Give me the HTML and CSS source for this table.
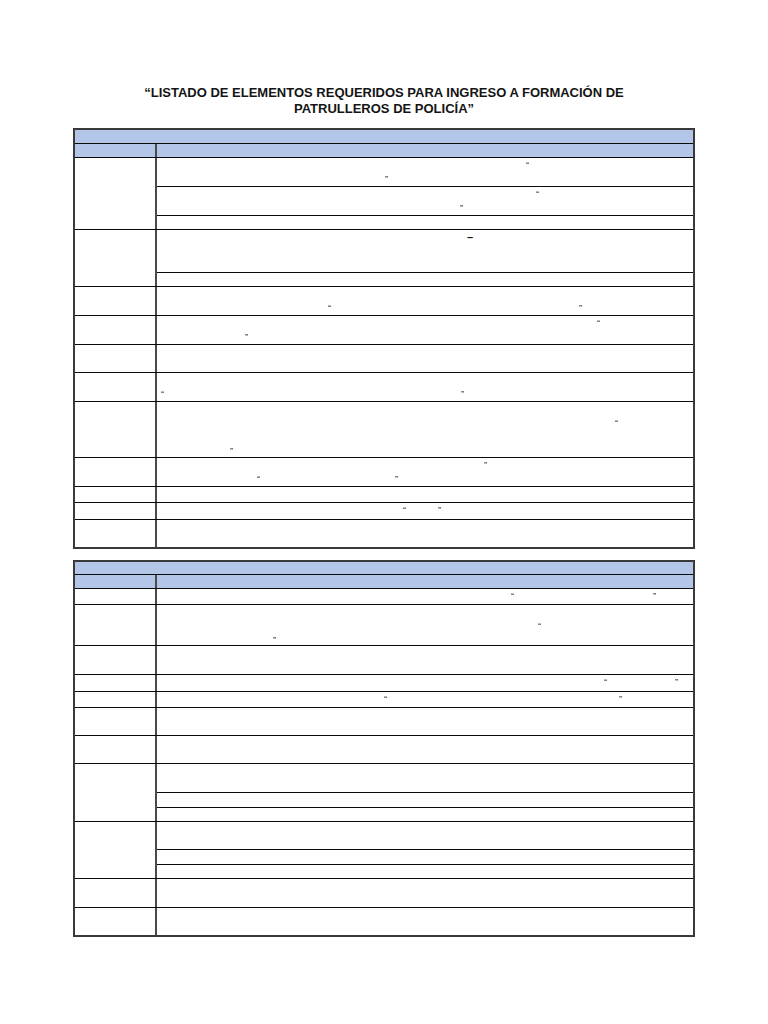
FILE: index.html
```html
<!DOCTYPE html>
<html lang="es">
<head>
<meta charset="utf-8">
<title>Listado de elementos requeridos</title>
<link rel="stylesheet" href="styles.css">
</head>
<body>
<div class="doc">
  <h1 class="title">“LISTADO DE ELEMENTOS REQUERIDOS PARA INGRESO A FORMACIÓN DE<br>PATRULLEROS DE POLICÍA”</h1>

  <div class="tbl">
    <div class="hd h13"></div>
    <div class="row hd2 h14"><div class="lab"></div><div class="val"></div></div>

    <div class="row">
      <div class="lab"></div>
      <div class="val">
        <div class="sub h28">
          <div class="ln"><span class="q m369">“</span></div>
          <div class="ln"><span class="q m228">”</span></div>
        </div>
        <div class="sub h29">
          <div class="ln"><span class="q m379">“</span></div>
          <div class="ln"><span class="q m303">”</span></div>
        </div>
        <div class="sub h14"></div>
      </div>
    </div>

    <div class="row">
      <div class="lab"></div>
      <div class="val">
        <div class="sub h42">
          <div class="ln"><span class="dash m310">–</span></div>
        </div>
        <div class="sub h14"></div>
      </div>
    </div>

    <div class="row h29"><div class="lab"></div><div class="val">
      <div class="ln"></div>
      <div class="ln"><span class="q m171">“</span><span class="q m422">”</span></div>
    </div></div>

    <div class="row h29"><div class="lab"></div><div class="val">
      <div class="ln"><span class="q m440">“</span></div>
      <div class="ln"><span class="q m88">”</span></div>
    </div></div>

    <div class="row h28"><div class="lab"></div><div class="val"></div></div>

    <div class="row h29"><div class="lab"></div><div class="val">
      <div class="ln"></div>
      <div class="ln"><span class="q m4">“</span><span class="q m304">”</span></div>
    </div></div>

    <div class="row h56"><div class="lab"></div><div class="val">
      <div class="ln"></div>
      <div class="ln"><span class="q m458">“</span></div>
      <div class="ln"></div>
      <div class="ln"><span class="q m73">”</span></div>
    </div></div>

    <div class="row h29"><div class="lab"></div><div class="val">
      <div class="ln"><span class="q m327">”</span></div>
      <div class="ln"><span class="q m100">“</span><span class="q m238">”</span></div>
    </div></div>

    <div class="row h16"><div class="lab"></div><div class="val"></div></div>

    <div class="row h17"><div class="lab"></div><div class="val">
      <div class="ln"><span class="q m246">“</span><span class="q m281">”</span></div>
    </div></div>

    <div class="row h28"><div class="lab"></div><div class="val"></div></div>
  </div>

  <div class="tbl second">
    <div class="hd h12"></div>
    <div class="row hd2 h14"><div class="lab"></div><div class="val"></div></div>

    <div class="row h16"><div class="lab"></div><div class="val">
      <div class="ln"><span class="q m354">“</span><span class="q m496">”</span></div>
    </div></div>

    <div class="row h41"><div class="lab"></div><div class="val">
      <div class="ln"></div>
      <div class="ln"><span class="q m381">“</span></div>
      <div class="ln"><span class="q m116">”</span></div>
    </div></div>

    <div class="row h29"><div class="lab"></div><div class="val"></div></div>

    <div class="row h17"><div class="lab"></div><div class="val">
      <div class="ln"><span class="q m447">“</span><span class="q m518">”</span></div>
    </div></div>

    <div class="row h16"><div class="lab"></div><div class="val">
      <div class="ln"><span class="q m227">“</span><span class="q m462">”</span></div>
    </div></div>

    <div class="row h28"><div class="lab"></div><div class="val"></div></div>
    <div class="row h28"><div class="lab"></div><div class="val"></div></div>

    <div class="row">
      <div class="lab"></div>
      <div class="val">
        <div class="sub h28"></div>
        <div class="sub h15"></div>
        <div class="sub h14"></div>
      </div>
    </div>

    <div class="row">
      <div class="lab"></div>
      <div class="val">
        <div class="sub h27"></div>
        <div class="sub h15"></div>
        <div class="sub h14"></div>
      </div>
    </div>

    <div class="row h29"><div class="lab"></div><div class="val"></div></div>
    <div class="row h28"><div class="lab"></div><div class="val"></div></div>
  </div>
</div>
</body>
</html>
```

FILE: styles.css
```css
* { box-sizing: border-box; }

html, body {
  margin: 0;
  padding: 0;
  background: #ffffff;
}

body {
  font-family: "Liberation Sans", Arial, sans-serif;
  color: #111111;
}

.doc {
  width: 622px;
  margin: 0 auto;
  padding-top: 85px;
}

.title {
  margin: 0 0 11px 0;
  font-size: 13px;
  line-height: 16px;
  font-weight: bold;
  text-align: center;
  color: #141414;
}

.tbl {
  border: 2px solid #3a3a3a;
  display: flex;
  flex-direction: column;
}

.tbl.second {
  margin-top: 11px;
}

.hd {
  background: #b4c6e7;
}

.row {
  display: grid;
  grid-template-columns: 82px 1fr;
  border-top: 1px solid #0a0a0a;
}

.hd2 {
  background: #b4c6e7;
}

.lab {
  border-right: 2px solid #4a4a4a;
}

.val {
  display: flex;
  flex-direction: column;
  min-width: 0;
}

.sub + .sub {
  border-top: 1px solid #0a0a0a;
}

.ln {
  height: 14px;
  display: grid;
  grid-template-columns: 1fr;
}

.ln > span {
  grid-area: 1 / 1;
  justify-self: start;
  line-height: 14px;
}

.q {
  font-size: 9px;
  color: #333333;
}

.dash {
  font-size: 11px;
  font-weight: bold;
  color: #111111;
}

/* row heights */
.h12 { height: 12px; }
.h13 { height: 13px; }
.h14 { height: 14px; }
.h15 { height: 15px; }
.h16 { height: 16px; }
.h17 { height: 17px; }
.h27 { height: 27px; }
.h28 { height: 28px; }
.h29 { height: 29px; }
.h41 { height: 41px; }
.h42 { height: 42px; }
.h56 { height: 56px; }

/* horizontal offsets of stray marks inside the wide column */
.m4 { margin-left: 4px; }
.m73 { margin-left: 73px; }
.m88 { margin-left: 88px; }
.m100 { margin-left: 100px; }
.m116 { margin-left: 116px; }
.m171 { margin-left: 171px; }
.m227 { margin-left: 227px; }
.m228 { margin-left: 228px; }
.m238 { margin-left: 238px; }
.m246 { margin-left: 246px; }
.m281 { margin-left: 281px; }
.m303 { margin-left: 303px; }
.m304 { margin-left: 304px; }
.m310 { margin-left: 310px; }
.m327 { margin-left: 327px; }
.m354 { margin-left: 354px; }
.m369 { margin-left: 369px; }
.m379 { margin-left: 379px; }
.m381 { margin-left: 381px; }
.m422 { margin-left: 422px; }
.m440 { margin-left: 440px; }
.m447 { margin-left: 447px; }
.m458 { margin-left: 458px; }
.m462 { margin-left: 462px; }
.m496 { margin-left: 496px; }
.m518 { margin-left: 518px; }
```
